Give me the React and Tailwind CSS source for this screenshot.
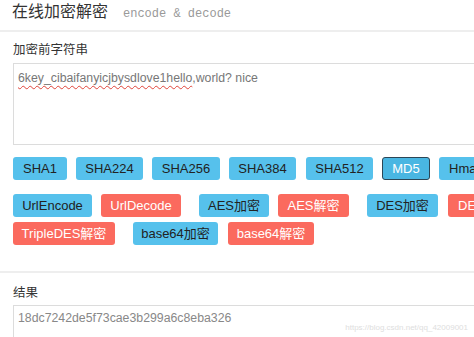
import React from "react";

const font = { fontFamily: '"Liberation Sans", "Noto Sans CJK SC", sans-serif' };

function Btn({ children, w, ml, red, active }) {
  let cls =
    "shrink-0 h-[23px] rounded-[3px] flex items-center justify-center text-[13px] whitespace-nowrap overflow-hidden ";
  if (red) cls += "bg-[#fb6a5e] text-white";
  else if (active) cls += "bg-[#49b6e2] text-white border border-[#2b4656]";
  else cls += "bg-[#56c1ec] text-[#222]";
  return (
    <div className={cls} style={{ width: w, marginLeft: ml }}>
      {children}
    </div>
  );
}

export default function App() {
  return (
    <div className="w-[474px] h-[337px] overflow-hidden bg-white text-[#333] relative" style={font}>
      <div className="h-[32px] border-b-2 border-[#eeeeee] flex items-end pb-[8px] pl-[12px]">
        <span className="text-[16px] leading-[20px] text-[#333]">在线加密解密</span>
        <span
          className="ml-[15px] text-[12px] leading-[16px] text-[#999]"
          style={{ fontFamily: '"Liberation Mono", monospace' }}
        >
          encode &amp; decode
        </span>
      </div>
      <div className="pl-[13px] pt-[9px]">
        <div className="text-[12.5px] leading-[18px] h-[20px] text-[#333]">加密前字符串</div>
        <div className="mt-[2px] h-[82px] w-[470px] border border-[#dcdcdc] pl-[4px] pt-[5px] text-[12.3px] leading-[18px] text-[#777] whitespace-nowrap">
          <span className="underline decoration-wavy decoration-[#e0443a] underline-offset-[3px] decoration-[1px]">
            6key_cibaifanyicjbysdlove1hello
          </span>
          ,world? nice
        </div>
      </div>
      <div className="mt-[12px] flex flex-col">
        <div className="flex h-[23px]">
          <Btn w={54} ml={13}>SHA1</Btn>
          <Btn w={67} ml={9}>SHA224</Btn>
          <Btn w={68} ml={9}>SHA256</Btn>
          <Btn w={67} ml={9}>SHA384</Btn>
          <Btn w={67} ml={10}>SHA512</Btn>
          <Btn w={48} ml={9} active>MD5</Btn>
          <div className="shrink-0 h-[23px] w-[60px] ml-[9px] rounded-[3px] bg-[#56c1ec] text-[13px] text-[#222] flex items-center pl-[10px] whitespace-nowrap">Hmac</div>
        </div>
        <div className="flex h-[23px] mt-[14px]">
          <Btn w={79} ml={13}>UrlEncode</Btn>
          <Btn w={80} ml={9} red>UrlDecode</Btn>
          <Btn w={70} ml={18}>AES加密</Btn>
          <Btn w={71} ml={9} red>AES解密</Btn>
          <Btn w={71} ml={18}>DES加密</Btn>
          <div className="shrink-0 h-[23px] w-[72px] ml-[10px] rounded-[3px] bg-[#fb6a5e] text-[13px] text-white flex items-center pl-[10px] whitespace-nowrap">DES解密</div>
        </div>
        <div className="flex h-[24px] mt-[5px]">
          <Btn w={102} ml={13} red>TripleDES解密</Btn>
          <Btn w={85} ml={18}>base64加密</Btn>
          <Btn w={86} ml={10} red>base64解密</Btn>
        </div>
      </div>
      <div className="mt-[25px] border-t-2 border-[#eeeeee]" />
      <div className="pl-[13px] pt-[11px]">
        <div className="text-[12.5px] leading-[18px] h-[20px] text-[#333]">结果</div>
        <div className="mt-[1px] h-[40px] w-[470px] border border-[#dcdcdc] pl-[4px] pt-[3px] text-[12.3px] leading-[18px] text-[#888] whitespace-nowrap">
          18dc7242de5f73cae3b299a6c8eba326
        </div>
      </div>
      <div className="absolute right-[6px] bottom-[3px] text-[8px] text-[#dedede]">
        https://blog.csdn.net/qq_42009001
      </div>
    </div>
  );
}
